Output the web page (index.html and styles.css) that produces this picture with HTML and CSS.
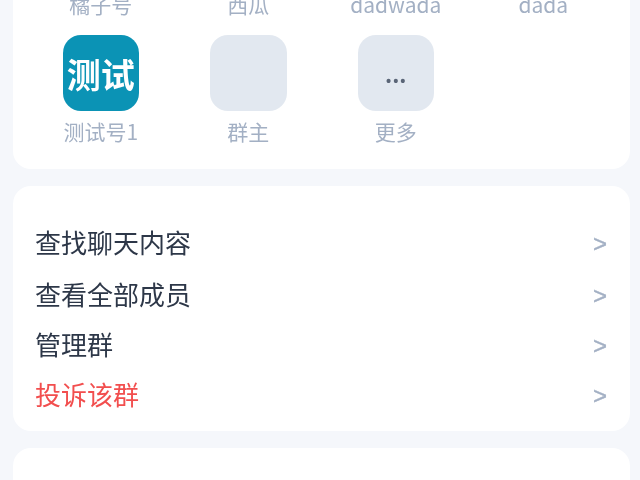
FILE: index.html
```html
<!DOCTYPE html>
<html lang="zh-CN">
<head>
    <meta charset="UTF-8">
    <meta name="viewport" content="width=device-width, initial-scale=1.0">
    <title>群聊信息</title>
    <link rel="stylesheet" href="styles.css">
</head>
<body>
    <main class="page">
        <section class="card members">
            <div class="member"><span class="member-name name-only">橘子号</span></div>
            <div class="member"><span class="member-name name-only">西瓜</span></div>
            <div class="member"><span class="member-name name-only">dadwada</span></div>
            <div class="member"><span class="member-name name-only">dada</span></div>
            <div class="member">
                <div class="avatar avatar-test">测试</div>
                <span class="member-name">测试号1</span>
            </div>
            <div class="member">
                <div class="avatar"></div>
                <span class="member-name">群主</span>
            </div>
            <div class="member">
                <div class="avatar avatar-more">...</div>
                <span class="member-name">更多</span>
            </div>
        </section>

        <section class="card menu">
            <div class="menu-row row-first"><span class="row-label">查找聊天内容</span><span class="arrow">&gt;</span></div>
            <div class="menu-row"><span class="row-label">查看全部成员</span><span class="arrow">&gt;</span></div>
            <div class="menu-row"><span class="row-label">管理群</span><span class="arrow">&gt;</span></div>
            <div class="menu-row danger"><span class="row-label">投诉该群</span><span class="arrow">&gt;</span></div>
        </section>

        <section class="card empty"></section>
    </main>
</body>
</html>
```

FILE: styles.css
```css
html, body {
    margin: 0;
    padding: 0;
    height: 480px;
    overflow: hidden;
    background-color: #f5f7fb;
}
body {
    font-family: "Noto Sans CJK SC", "Liberation Sans", sans-serif;
}
.page {
    display: flex;
    flex-direction: column;
    gap: 17px;
    margin-top: -20px;
    padding: 0 10px 0 13px;
    filter: blur(0.4px);
}
.card {
    background: #fff;
    border-radius: 18px;
}
.members {
    display: grid;
    grid-template-columns: repeat(4, 1fr);
    row-gap: 19px;
    padding: 0 13px 26px 14px;
}
.member {
    display: flex;
    flex-direction: column;
    align-items: center;
    gap: 8px;
}
.member-name {
    font-size: 21px;
    line-height: 24px;
    color: #a3b0c4;
}
.name-only {
    padding-top: 12px;
}
.avatar {
    display: flex;
    align-items: center;
    justify-content: center;
    width: 76.5px;
    height: 76px;
    border-radius: 18px;
    background: #e2e8f0;
}
.avatar-test {
    background: #0b93b5;
    color: #fff;
    font-size: 34px;
    font-weight: 700;
}
.avatar-more {
    color: #5a6577;
    font-size: 22px;
    font-weight: 700;
    line-height: 1;
}
.menu {
    padding: 33px 23px 10px 22px;
}
.menu-row {
    display: flex;
    justify-content: space-between;
    align-items: center;
    height: 50px;
    font-size: 26px;
    color: #2d3748;
}
.row-label {
    padding-bottom: 6px;
}
.row-first {
    margin-bottom: 2px;
}
.danger {
    color: #f24e4e;
}
.arrow {
    font-family: "Liberation Sans", sans-serif;
    font-size: 24px;
    -webkit-text-stroke: 0.4px #a3b0c4;
    color: #a3b0c4;
}
.empty {
    height: 100px;
}
```
